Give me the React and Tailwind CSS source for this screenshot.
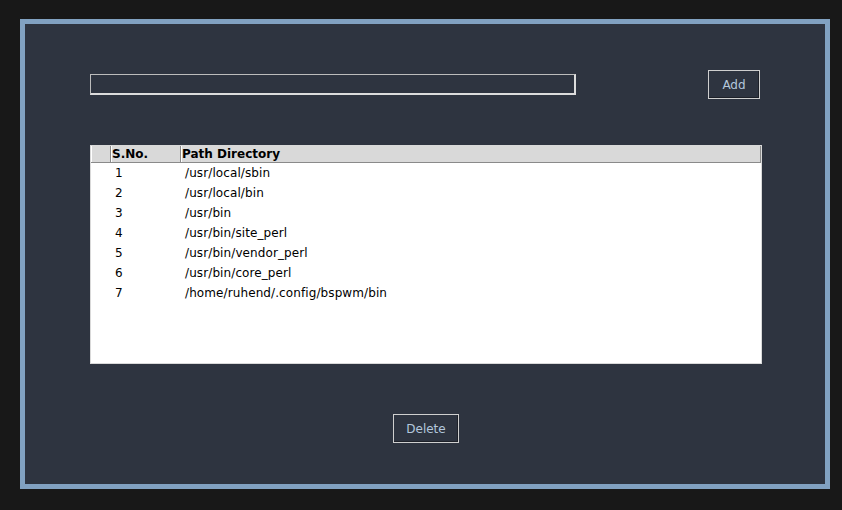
export default function App() {
  const rows = [
    "/usr/local/sbin",
    "/usr/local/bin",
    "/usr/bin",
    "/usr/bin/site_perl",
    "/usr/bin/vendor_perl",
    "/usr/bin/core_perl",
    "/home/ruhend/.config/bspwm/bin",
  ];
  const font = { fontFamily: '"DejaVu Sans", sans-serif' };
  return (
    <div className="w-[842px] h-[510px] bg-[#181818] pt-[19px] pl-[20px]" style={font}>
      <div className="w-[810px] h-[470px] border-[5px] border-[#81a1c1] bg-[#2e3440] flex flex-col">
        <div className="flex items-center justify-between pl-[65px] pr-[65px] mt-[46px]">
          <div className="w-[486px] h-[21px] border-t border-l border-[#bcbcbc] border-b-2 border-r-2 border-b-[#dcdcdc] border-r-[#dcdcdc] bg-[#2e3440]" />
          <button className="w-[52px] h-[29px] border border-[#cfcfcf] shadow-[inset_-1px_-1px_0_#1d2028] text-[12px] text-[#b3c7dc] bg-[#2e3440]">
            Add
          </button>
        </div>
        <div className="ml-[65px] mt-[46px] w-[672px] h-[219px] border border-[#d9d9d9] bg-white flex flex-col text-[12px] text-black">
          <div className="flex h-[17px] bg-[#d9d9d9] border-b border-[#8a8a8a] leading-[16px] font-bold">
            <div className="w-[20px] border-r border-[#8a8a8a] border-l border-l-white" />
            <div className="w-[70px] border-r border-[#8a8a8a] border-l border-l-white">S.No.</div>
            <div className="flex-1 border-r border-[#8a8a8a] border-l border-l-white">Path Directory</div>
          </div>
          {rows.map((r, i) => (
            <div key={i} className="flex h-[20px] items-center tracking-[0.1px]">
              <div className="w-[24px]" />
              <div className="w-[70px]">{i + 1}</div>
              <div className="flex-1">{r}</div>
            </div>
          ))}
        </div>
        <div className="flex justify-center mt-[50px] pl-[2px]">
          <button className="w-[66px] h-[29px] border border-[#cfcfcf] shadow-[inset_-1px_-1px_0_#1d2028] text-[12px] text-[#b3c7dc] bg-[#2e3440]">
            Delete
          </button>
        </div>
      </div>
    </div>
  );
}
